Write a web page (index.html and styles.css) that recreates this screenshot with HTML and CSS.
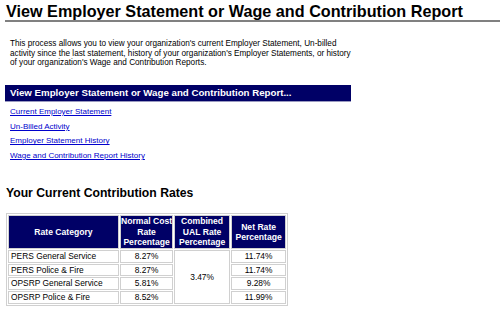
FILE: index.html
```html
<!DOCTYPE html>
<html>
<head>
<meta charset="utf-8">
<link rel="stylesheet" href="styles.css">
</head>
<body>
<div class="page">
  <h1 class="title">View Employer Statement or Wage and Contribution Report</h1>
  <p class="intro">This process allows you to view your organization's current Employer Statement, Un-billed<br>activity since the last statement, history of your organization's Employer Statements, or history<br>of your organization's Wage and Contribution Reports.</p>
  <div class="bar">View Employer Statement or Wage and Contribution Report...</div>
  <ul class="links">
    <li><a href="#">Current Employer Statement</a></li>
    <li><a href="#">Un-Billed Activity</a></li>
    <li><a href="#">Employer Statement History</a></li>
    <li><a href="#">Wage and Contribution Report History</a></li>
  </ul>
  <h2 class="subtitle">Your Current Contribution Rates</h2>
  <table class="rates">
    <thead>
      <tr>
        <th class="c1">Rate Category</th>
        <th class="c2">Normal Cost<br>Rate<br>Percentage</th>
        <th class="c3">Combined<br>UAL Rate<br>Percentage</th>
        <th class="c4">Net Rate<br>Percentage</th>
      </tr>
    </thead>
    <tbody>
      <tr><td class="cat">PERS General Service</td><td>8.27%</td><td rowspan="4">3.47%</td><td>11.74%</td></tr>
      <tr><td class="cat">PERS Police &amp; Fire</td><td>8.27%</td><td>11.74%</td></tr>
      <tr><td class="cat">OPSRP General Service</td><td>5.81%</td><td>9.28%</td></tr>
      <tr><td class="cat">OPSRP Police &amp; Fire</td><td>8.52%</td><td>11.99%</td></tr>
    </tbody>
  </table>
</div>
</body>
</html>
```
FILE: styles.css
```css
html, body {
  margin: 0;
  padding: 0;
  background: #fff;
}
body {
  font-family: "Liberation Sans", Arial, sans-serif;
  color: #000;
}
.page {
  padding: 2px 0 0 5px;
}
.title {
  margin: 0;
  font-size: 16.2px;
  font-weight: bold;
  line-height: 18px;
  padding-left: 1px;
  border-bottom: 2px solid #808080;
  white-space: nowrap;
}
.intro {
  margin: 17px 0 0 5px;
  font-size: 8.2px;
  line-height: 9.7px;
}
.bar {
  margin-top: 17px;
  width: 341px;
  background: #000066;
  color: #fff;
  font-size: 9.7px;
  font-weight: bold;
  line-height: 16px;
  padding-left: 5px;
  border-bottom: 1px solid #9a9ac0;
}
.links {
  list-style: none;
  margin: 0;
  padding: 3px 0 0 5px;
  font-size: 8px;
}
.links li {
  line-height: 14.6px;
}
.links a {
  color: #0000cc;
  text-decoration: underline;
}
.subtitle {
  margin: 23px 0 0 1px;
  font-size: 12.2px;
  font-weight: bold;
  line-height: 15px;
}
.rates {
  margin: 12px 0 0 1px;
  border: 1px solid #d0d0d0;
  border-spacing: 1px;
  table-layout: fixed;
  font-size: 8.4px;
}
.rates th,
.rates td {
  box-sizing: border-box;
  border: 1px solid #d0d0d0;
}
.rates th {
  background: #000066;
  color: #fff;
  font-weight: bold;
  font-size: 8.6px;
  line-height: 10.5px;
  padding: 0;
  text-align: center;
  white-space: nowrap;
}
.rates .c1 { width: 111px; }
.rates .c2 { width: 53px; }
.rates .c3 { width: 56px; }
.rates .c4 { width: 55px; }
.rates td {
  padding: 0 2px;
  height: 12.7px;
  line-height: 10.5px;
  text-align: center;
}
.rates td.cat {
  text-align: left;
}
```
